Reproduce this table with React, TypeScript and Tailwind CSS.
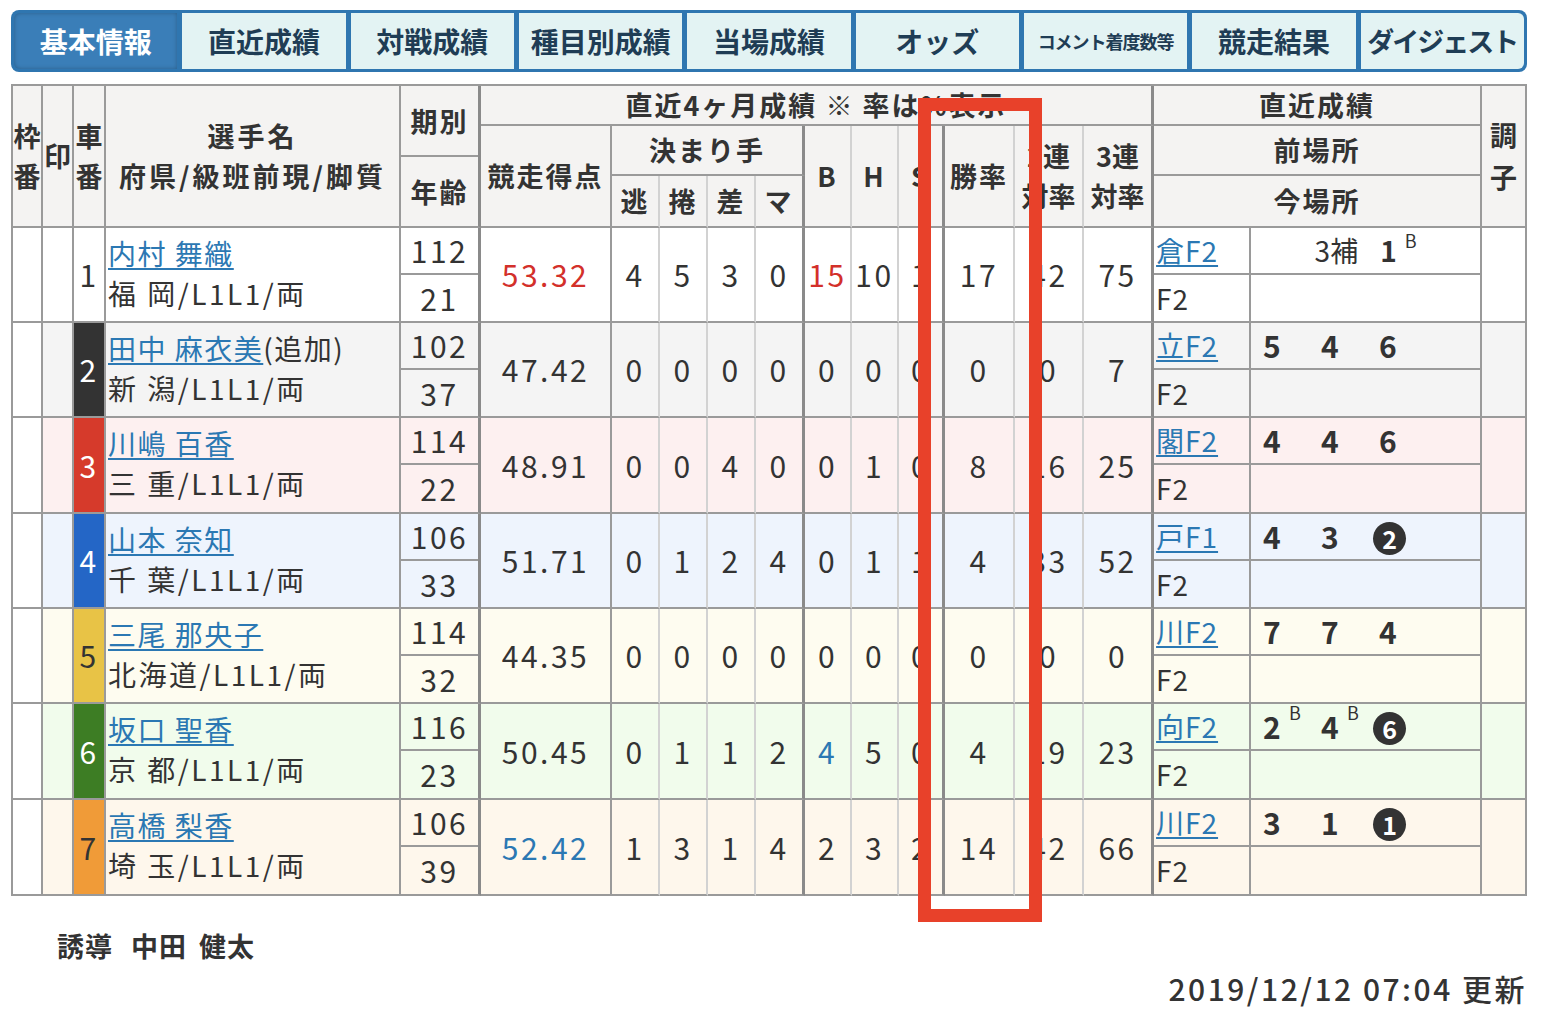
import React from "react";

type Item = { n: string; sup?: string; circle?: boolean };

type Racer = {
  num: number;
  name: string;
  extra?: string;
  pref: string;
  ki: number;
  age: number;
  score: string;
  scoreColor?: string;
  kimarite: number[];
  bhs: number[];
  bColor?: string;
  rates: number[];
  prev: string;
  now: string;
  results: Item[];
  centered?: string;
  h: number;
};

const racers: Racer[] = [
  { num: 1, name: "内村 舞織", pref: "福 岡/L1L1/両", ki: 112, age: 21, score: "53.32", scoreColor: "text-[#d3302a]", kimarite: [4, 5, 3, 0], bhs: [15, 10, 1], bColor: "text-[#d3302a]", rates: [17, 42, 75], prev: "倉F2", now: "F2", results: [], centered: "3補", h: 95 },
  { num: 2, name: "田中 麻衣美", extra: "(追加)", pref: "新 潟/L1L1/両", ki: 102, age: 37, score: "47.42", kimarite: [0, 0, 0, 0], bhs: [0, 0, 0], rates: [0, 0, 7], prev: "立F2", now: "F2", results: [{ n: "5" }, { n: "4" }, { n: "6" }], h: 95 },
  { num: 3, name: "川嶋 百香", pref: "三 重/L1L1/両", ki: 114, age: 22, score: "48.91", kimarite: [0, 0, 4, 0], bhs: [0, 1, 0], rates: [8, 16, 25], prev: "閣F2", now: "F2", results: [{ n: "4" }, { n: "4" }, { n: "6" }], h: 96 },
  { num: 4, name: "山本 奈知", pref: "千 葉/L1L1/両", ki: 106, age: 33, score: "51.71", kimarite: [0, 1, 2, 4], bhs: [0, 1, 1], rates: [4, 33, 52], prev: "戸F1", now: "F2", results: [{ n: "4" }, { n: "3" }, { n: "2", circle: true }], h: 95 },
  { num: 5, name: "三尾 那央子", pref: "北海道/L1L1/両", ki: 114, age: 32, score: "44.35", kimarite: [0, 0, 0, 0], bhs: [0, 0, 0], rates: [0, 0, 0], prev: "川F2", now: "F2", results: [{ n: "7" }, { n: "7" }, { n: "4" }], h: 95 },
  { num: 6, name: "坂口 聖香", pref: "京 都/L1L1/両", ki: 116, age: 23, score: "50.45", kimarite: [0, 1, 1, 2], bhs: [4, 5, 0], bColor: "text-[#2b78b3]", rates: [4, 19, 23], prev: "向F2", now: "F2", results: [{ n: "2", sup: "B" }, { n: "4", sup: "B" }, { n: "6", circle: true }], h: 96 },
  { num: 7, name: "高橋 梨香", pref: "埼 玉/L1L1/両", ki: 106, age: 39, score: "52.42", scoreColor: "text-[#2b78b3]", kimarite: [1, 3, 1, 4], bhs: [2, 3, 2], rates: [14, 42, 66], prev: "川F2", now: "F2", results: [{ n: "3" }, { n: "1" }, { n: "1", circle: true }], h: 96 },
];

const rowBg = ["bg-white", "bg-[#f4f4f4]", "bg-[#fdf0f0]", "bg-[#eef4fd]", "bg-[#fefcf0]", "bg-[#f1fcec]", "bg-[#fef7ec]"];
const carBg = [
  "bg-white text-[#333]",
  "bg-[#333333] text-white",
  "bg-[#d63a2b] text-white",
  "bg-[#2466c6] text-white",
  "bg-[#e8c346] text-[#333]",
  "bg-[#3d7d24] text-white",
  "bg-[#f09b38] text-[#333]",
];

const cell = "border-r-2 border-b-2 border-[#9a9a9a] p-0";
const light = "border-r-2 border-b-2 border-[#9a9a9a] border-r-[#d2d2d2] p-0";
const thick = "border-r-[3px] border-b-2 border-[#9a9a9a] border-r-[#8a8a8a] p-0";
const hd = "bg-[#f4f3f2] text-[27px] font-semibold text-[#333] text-center align-middle leading-[38px] tracking-[2px]";
const num = "text-[30px] text-center align-middle tracking-[2.5px]";
const link = "text-[#2b78b3] underline underline-offset-[3px] decoration-2";

const tabs = ["直近成績", "対戦成績", "種目別成績", "当場成績", "オッズ", "コメント着度数等", "競走結果", "ダイジェスト"];

function ResultCell({ r }: { r: Racer }) {
  if (r.centered) {
    return (
      <div className="text-center text-[28px] leading-[45px]">
        {r.centered}
        <span className="ml-[22px] font-bold">1</span>
        <span className="relative -top-[14px] ml-[8px] text-[18px]">B</span>
      </div>
    );
  }
  return (
    <div className="flex pl-[12px] leading-[45px]">
      {r.results.map((it, i) => (
        <span key={i} className="relative w-[58px] text-[30px] font-bold">
          {it.circle ? (
            <span className="-ml-[6px] mt-[6px] inline-flex h-[33px] w-[33px] items-center justify-center rounded-full bg-[#333] text-[25px] leading-none text-white">
              {it.n}
            </span>
          ) : (
            it.n
          )}
          {it.sup && <span className="absolute left-[26px] -top-[14px] text-[18px] font-normal">{it.sup}</span>}
        </span>
      ))}
    </div>
  );
}

export default function App() {
  return (
    <div className="relative h-[1014px] w-[1568px] bg-white pt-[10px] font-['Noto_Sans_CJK_JP','Noto_Sans',sans-serif] text-[#333]">
      <div className="ml-[11px] flex h-[62px] w-[1516px] gap-[5px] rounded-[8px] bg-[#2f76b0] p-[3px]">
        <div className="flex flex-1 items-center justify-center rounded-l-[6px] bg-[#3a7eb8] text-[28px] font-bold text-white shadow-[inset_0_0_4px_rgba(0,0,0,0.25)]">
          基本情報
        </div>
        {tabs.map((t, i) => (
          <div
            key={t}
            className={
              "flex flex-1 items-center justify-center whitespace-nowrap bg-[#e3f3f3] font-bold text-[#1f3d55] " +
              (i === 5 ? "text-[18px] tracking-[-1px] " : i === 7 ? "text-[27px] tracking-[-2px] " : "text-[28px] ") +
              (i === tabs.length - 1 ? "rounded-r-[6px]" : "")
            }
          >
            {t}
          </div>
        ))}
      </div>

      <table className="ml-[11px] mt-[12px] w-[1516px] table-fixed border-separate border-spacing-0 border-l-2 border-t-2 border-[#9a9a9a]">
        <colgroup>
          {[30, 31, 32, 295, 80, 131, 48, 48, 48, 49, 47, 47, 46, 70, 69, 70, 97, 231, 45].map((w, i) => (
            <col key={i} style={{ width: w }} />
          ))}
        </colgroup>
        <thead>
          <tr className="h-[40px]">
            <th rowSpan={3} className={cell + " " + hd + " tracking-normal"}>
              <div className="leading-[40px]">枠<br />番</div>
            </th>
            <th rowSpan={3} className={cell + " " + hd + " tracking-normal"}>印</th>
            <th rowSpan={3} className={cell + " " + hd + " tracking-normal"}>
              <div className="leading-[40px]">車<br />番</div>
            </th>
            <th rowSpan={3} className={cell + " " + hd + " tracking-[3px]"}>
              <div className="leading-[40px]">選手名<br />府県/級班前現/脚質</div>
            </th>
            <th rowSpan={3} className={thick + " " + hd}>
              <div className="flex h-[71px] items-center justify-center border-b-2 border-[#9a9a9a]">期別</div>
              <div className="flex h-[69px] items-center justify-center">年齢</div>
            </th>
            <th colSpan={11} className={thick + " " + hd}>直近4ヶ月成績 ※ 率は%表示</th>
            <th colSpan={2} className={cell + " " + hd}>直近成績</th>
            <th rowSpan={3} className={cell + " " + hd + " tracking-normal"}>
              <div className="leading-[42px]">調<br />子</div>
            </th>
          </tr>
          <tr className="h-[50px]">
            <th rowSpan={2} className={cell + " " + hd}>競走得点</th>
            <th colSpan={4} className={thick + " " + hd}>決まり手</th>
            <th rowSpan={2} className={light + " " + hd}>B</th>
            <th rowSpan={2} className={light + " " + hd}>H</th>
            <th rowSpan={2} className={thick + " " + hd}>S</th>
            <th rowSpan={2} className={light + " " + hd}>勝率</th>
            <th rowSpan={2} className={light + " " + hd + " tracking-normal"}>
              <div className="leading-[40px]">2連<br />対率</div>
            </th>
            <th rowSpan={2} className={thick + " " + hd + " tracking-normal"}>
              <div className="leading-[40px]">3連<br />対率</div>
            </th>
            <th colSpan={2} className={cell + " " + hd}>前場所</th>
          </tr>
          <tr className="h-[52px]">
            <th className={light + " " + hd}>逃</th>
            <th className={light + " " + hd}>捲</th>
            <th className={light + " " + hd}>差</th>
            <th className={thick + " " + hd}>マ</th>
            <th colSpan={2} className={cell + " " + hd}>今場所</th>
          </tr>
        </thead>
        <tbody>
          {racers.map((r, i) => {
            const bottomH = r.h - 2 - 47;
            return (
              <tr key={r.num} className={rowBg[i]} style={{ height: r.h }}>
                <td className={cell + " bg-white"}></td>
                <td className={cell}></td>
                <td className={cell + " " + carBg[i] + " " + num}>{r.num}</td>
                <td className={cell + " align-top"}>
                  <div className="pl-[2px] pt-[5px] text-[28px] leading-[40px] tracking-[1.5px] whitespace-nowrap">
                    <span className={link}>{r.name}</span>
                    {r.extra}
                    <br />
                    <span className="tracking-[2.5px]">{r.pref}</span>
                  </div>
                </td>
                <td className={thick + " align-top"}>
                  <div className="flex h-[47px] items-center justify-center border-b-2 border-[#9a9a9a] text-[30px] tracking-[2.5px]">{r.ki}</div>
                  <div className="flex items-center justify-center text-[30px] tracking-[2.5px]" style={{ height: bottomH }}>{r.age}</div>
                </td>
                <td className={cell + " " + num + " " + (r.scoreColor ?? "")}>{r.score}</td>
                {r.kimarite.map((k, j) => (
                  <td key={"k" + j} className={(j === 3 ? thick : light) + " " + num}>{k}</td>
                ))}
                {r.bhs.map((k, j) => (
                  <td key={"b" + j} className={(j === 2 ? thick : light) + " " + num + " " + (j === 0 ? r.bColor ?? "" : "")}>{k}</td>
                ))}
                {r.rates.map((k, j) => (
                  <td key={"r" + j} className={(j === 2 ? thick : light) + " " + num}>{k}</td>
                ))}
                <td className={cell + " align-top"}>
                  <div className="h-[47px] border-b-2 border-[#9a9a9a] pl-[2px] text-[28px] leading-[45px] tracking-[1px]">
                    <span className={link}>{r.prev}</span>
                  </div>
                  <div className="pl-[2px] text-[28px] tracking-[1px]" style={{ height: bottomH, lineHeight: bottomH + "px" }}>{r.now}</div>
                </td>
                <td className={cell + " align-top"}>
                  <div className="h-[47px] border-b-2 border-[#9a9a9a]">
                    <ResultCell r={r} />
                  </div>
                  <div style={{ height: bottomH }}></div>
                </td>
                <td className={cell}></td>
              </tr>
            );
          })}
        </tbody>
      </table>

      <div className="ml-[57px] mt-[34px] flex gap-[18px] text-[27px] font-semibold leading-[32px] tracking-[1px]">
        <span>誘導</span>
        <span className="flex gap-[12px]">
          <span>中田</span>
          <span>健太</span>
        </span>
      </div>
      <div className="mr-[41px] mt-[7px] text-right text-[30px] font-medium leading-[38px] tracking-[2.5px]">2019/12/12 07:04 更新</div>

      <div className="absolute left-[918px] top-[98px] h-[824px] w-[124px] border-[13px] border-[#e8412a]"></div>
    </div>
  );
}
